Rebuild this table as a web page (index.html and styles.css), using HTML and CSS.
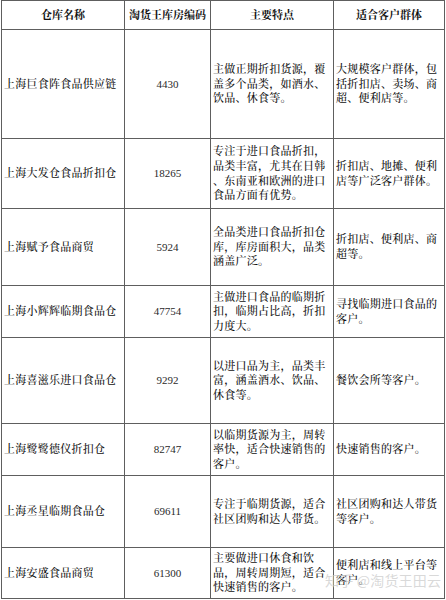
FILE: index.html
```html
<!DOCTYPE html>
<html lang="zh-CN">
<head>
<meta charset="utf-8">
<title>仓库列表</title>
<link rel="stylesheet" href="styles.css">
</head>
<body>
<div class="page">
  <div class="grid">
    <div class="cell head">仓库名称</div>
    <div class="cell head">淘货王库房编码</div>
    <div class="cell head">主要特点</div>
    <div class="cell head">适合客户群体</div>

    <div class="cell name">上海巨食阵食品供应链</div>
    <div class="cell code">4430</div>
    <div class="cell feat">主做正期折扣货源，覆<br>盖多个品类，如酒水、<br>饮品、休食等。</div>
    <div class="cell cust">大规模客户群体，包<br>括折扣店、卖场、商<br>超、便利店等。</div>

    <div class="cell name">上海大发仓食品折扣仓</div>
    <div class="cell code">18265</div>
    <div class="cell feat">专注于进口食品折扣，<br>品类丰富，尤其在日韩<br>、东南亚和欧洲的进口<br>食品方面有优势。</div>
    <div class="cell cust">折扣店、地摊、便利<br>店等广泛客户群体。</div>

    <div class="cell name">上海赋予食品商贸</div>
    <div class="cell code">5924</div>
    <div class="cell feat">全品类进口食品折扣仓<br>库，库房面积大，品类<br>涵盖广泛。</div>
    <div class="cell cust">折扣店、便利店、商<br>超等。</div>

    <div class="cell name">上海小辉辉临期食品仓</div>
    <div class="cell code">47754</div>
    <div class="cell feat">主做进口食品的临期折<br>扣，临期占比高，折扣<br>力度大。</div>
    <div class="cell cust">寻找临期进口食品的<br>客户。</div>

    <div class="cell name">上海喜滋乐进口食品仓</div>
    <div class="cell code">9292</div>
    <div class="cell feat">以进口品为主，品类丰<br>富，涵盖酒水、饮品、<br>休食等。</div>
    <div class="cell cust">餐饮会所等客户。</div>

    <div class="cell name">上海鹭鹭德仪折扣仓</div>
    <div class="cell code">82747</div>
    <div class="cell feat">以临期货源为主，周转<br>率快，适合快速销售的<br>客户。</div>
    <div class="cell cust">快速销售的客户。</div>

    <div class="cell name">上海丞星临期食品仓</div>
    <div class="cell code">69611</div>
    <div class="cell feat">专注于临期货源，适合<br>社区团购和达人带货。</div>
    <div class="cell cust">社区团购和达人带货<br>等客户。</div>

    <div class="cell name">上海安盛食品商贸</div>
    <div class="cell code">61300</div>
    <div class="cell feat">主要做进口休食和饮<br>品，周转周期短，适合<br>快速销售的客户。</div>
    <div class="cell cust">便利店和线上平台等<br>客户。</div>
  </div>
  <div class="watermark">知乎 @淘货王田云</div>
</div>
</body>
</html>
```
FILE: styles.css
```css
html, body {
  margin: 0;
  padding: 0;
  background: #ffffff;
}

.page {
  position: relative;
  width: 446px;
  height: 600px;
  overflow: hidden;
  font-family: "Liberation Serif", "Noto Serif CJK SC", "Noto Sans CJK SC", serif;
  color: #111111;
}

.grid {
  margin-left: 1px;
  width: 444px;
  box-sizing: border-box;
  display: grid;
  grid-template-columns: 122px 85px 122px 110px;
  grid-template-rows: 28px 108px 69px 76px 51px 85px 51px 71px 50px;
  gap: 1px;
  padding: 1px;
  background: #5e5e5e;
}

.cell {
  background: #ffffff;
  display: flex;
  align-items: center;
  font-size: 11px;
  font-weight: 500;
  line-height: 14.6px;
  letter-spacing: 0.25px;
  white-space: nowrap;
}

.head {
  justify-content: center;
  font-weight: 700;
  letter-spacing: 0;
}

.name {
  padding-left: 2px;
}

.code {
  justify-content: center;
  font-weight: 400;
  letter-spacing: 0;
  color: #2a2a2a;
}

.feat {
  padding-left: 2px;
}

.cust {
  padding-left: 2px;
}

.watermark {
  position: absolute;
  left: 325px;
  top: 571px;
  font-family: "Noto Sans CJK SC", sans-serif;
  font-size: 14px;
  line-height: 18px;
  color: rgba(200, 200, 200, 0.7);
  letter-spacing: 0.2px;
  white-space: nowrap;
}
```
